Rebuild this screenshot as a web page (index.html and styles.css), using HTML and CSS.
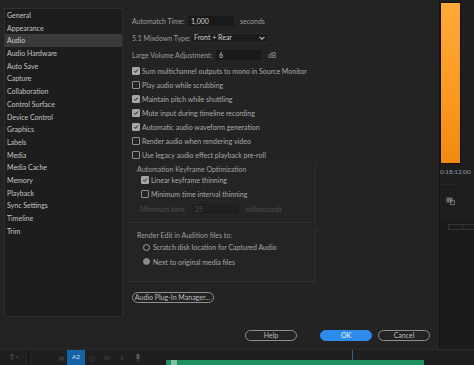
FILE: index.html
```html
<!DOCTYPE html>
<html>
<head>
<meta charset="utf-8">
<link rel="stylesheet" href="styles.css">
</head>
<body>
<div class="screen">
  <div class="top">
    <div class="dialog">
      <div class="main">
        <ul class="cats">
          <li>General</li>
          <li>Appearance</li>
          <li class="sel">Audio</li>
          <li>Audio Hardware</li>
          <li>Auto Save</li>
          <li>Capture</li>
          <li>Collaboration</li>
          <li>Control Surface</li>
          <li>Device Control</li>
          <li>Graphics</li>
          <li>Labels</li>
          <li>Media</li>
          <li>Media Cache</li>
          <li>Memory</li>
          <li>Playback</li>
          <li>Sync Settings</li>
          <li>Timeline</li>
          <li>Trim</li>
        </ul>
        <div class="pane">
          <div class="frow r1">
            <span class="lbl l1">Automatch Time:</span>
            <span class="field f1">1,000</span>
            <span class="unit">seconds</span>
          </div>
          <div class="frow r2">
            <span class="lbl l2">5.1 Mixdown Type:</span>
            <span class="select">Front + Rear
              <svg class="chev" width="6" height="4" viewBox="0 0 6 4"><path d="M0.6 0.8 L3 3.2 L5.4 0.8" fill="none" stroke="#b5b5b5" stroke-width="1.1"/></svg>
            </span>
          </div>
          <div class="frow r3">
            <span class="lbl l3">Large Volume Adjustment:</span>
            <span class="field f3">6</span>
            <span class="unit u3">dB</span>
          </div>
          <div class="checks">
            <div class="ck"><span class="cb on"><svg width="8" height="8" viewBox="0 0 8 8"><path d="M1.6 4.1 L3.3 5.8 L6.5 2" fill="none" stroke="#1c1c1c" stroke-width="1.3"/></svg></span><span>Sum multichannel outputs to mono in Source Monitor</span></div>
            <div class="ck"><span class="cb"></span><span>Play audio while scrubbing</span></div>
            <div class="ck"><span class="cb on"><svg width="8" height="8" viewBox="0 0 8 8"><path d="M1.6 4.1 L3.3 5.8 L6.5 2" fill="none" stroke="#1c1c1c" stroke-width="1.3"/></svg></span><span>Maintain pitch while shuttling</span></div>
            <div class="ck"><span class="cb on"><svg width="8" height="8" viewBox="0 0 8 8"><path d="M1.6 4.1 L3.3 5.8 L6.5 2" fill="none" stroke="#1c1c1c" stroke-width="1.3"/></svg></span><span>Mute input during timeline recording</span></div>
            <div class="ck"><span class="cb on"><svg width="8" height="8" viewBox="0 0 8 8"><path d="M1.6 4.1 L3.3 5.8 L6.5 2" fill="none" stroke="#1c1c1c" stroke-width="1.3"/></svg></span><span>Automatic audio waveform generation</span></div>
            <div class="ck"><span class="cb"></span><span>Render audio when rendering video</span></div>
            <div class="ck"><span class="cb"></span><span>Use legacy audio effect playback pre-roll</span></div>
          </div>
          <div class="group g1">
            <div class="gtitle">Automation Keyframe Optimization</div>
            <div class="ck gck"><span class="cb on"><svg width="8" height="8" viewBox="0 0 8 8"><path d="M1.6 4.1 L3.3 5.8 L6.5 2" fill="none" stroke="#1c1c1c" stroke-width="1.3"/></svg></span><span>Linear keyframe thinning</span></div>
            <div class="ck gck"><span class="cb"></span><span>Minimum time interval thinning</span></div>
            <div class="frow dis">
              <span class="lbl l4">Minimum time</span>
              <span class="field f4">25</span>
              <span class="unit">milliseconds</span>
            </div>
          </div>
          <div class="group g2">
            <div class="gtitle">Render Edit in Audition files to:</div>
            <div class="rd"><span class="radio"></span><span>Scratch disk location for Captured Audio</span></div>
            <div class="rd"><span class="radio on"></span><span>Next to original media files</span></div>
          </div>
          <div class="btnrow">
            <span class="btn plug">Audio Plug-In Manager...</span>
          </div>
        </div>
      </div>
      <div class="footer">
        <span class="btn help">Help</span>
        <span class="btn ok">OK</span>
        <span class="btn cancel">Cancel</span>
      </div>
    </div>
    <div class="side">
      <div class="meter"></div>
      <div class="tc">0:18:12:00</div>
      <div class="ticks">' ' ' ' ' '</div>
      <div class="sicon">
        <svg width="10" height="9" viewBox="0 0 10 9"><rect x="0.5" y="0.5" width="6" height="5" fill="#6a6a6a"/><rect x="4.5" y="3.5" width="4" height="4" fill="none" stroke="#7a7a7a" stroke-width="0.8"/></svg>
      </div>
      <div class="spanel">
        <div class="shead"><span class="sc1"></span><span class="sc2"></span></div>
      </div>
    </div>
  </div>
  <div class="timeline">
    <div class="tl-left">
      <svg width="10" height="10" viewBox="0 0 10 10"><path d="M3 8 V2 M1.5 3.5 L3 2 L4.5 3.5" fill="none" stroke="#555" stroke-width="0.9"/><path d="M7 5 h2" stroke="#555" stroke-width="0.9"/></svg>
    </div>
    <div class="tl-head">
      <span class="tl-ic">&#9636;</span>
      <span class="a2">A2</span>
      <span class="tl-ic">&#9707;</span>
      <span class="tl-ic">M</span>
      <span class="tl-ic">S</span>
      <svg class="mic" width="6" height="9" viewBox="0 0 6 9"><rect x="1.5" y="0.5" width="3" height="5.5" rx="1.5" fill="#5a5a5a"/><path d="M0.6 4.5 Q3 8 5.4 4.5 M3 7 V9" fill="none" stroke="#5a5a5a" stroke-width="0.7"/></svg>
    </div>
    <div class="tl-track">
      <div class="playhead"></div>
      <div class="clip"><span class="clip-hi"></span></div>
    </div>
  </div>
</div>
</body>
</html>
```
FILE: styles.css
```css
* { box-sizing: border-box; margin: 0; padding: 0; }
html, body { width: 474px; height: 365px; overflow: hidden; background: #1d1d1d; }
body { font-family: Lato, "Liberation Sans", sans-serif; font-size: 7px; color: #b0b0b0; }

.screen { display: flex; flex-direction: column; width: 474px; height: 365px; }
.top { display: flex; height: 349px; }

.dialog {
  width: 440px; height: 349px; background: #232323;
  border-right: 1px solid #141414;
  padding: 8px 9px 8px 4px;
  display: flex; flex-direction: column;
}
.main { display: flex; height: 309px; }

.cats {
  list-style: none; width: 119px; height: 309px;
  background: #1d1d1d; border: 1px solid #2e2e2e;
  padding-top: 0;
}
.cats li {
  height: 12.7px; line-height: 12.7px; padding-left: 2px;
  color: #c4c4c4; white-space: nowrap;
}
.cats li.sel { background: #3a3a3a; color: #d0d0d0; }

.pane { margin-left: 9px; display: flex; flex-direction: column; flex: 1; }

.frow { display: flex; align-items: center; height: 10px; white-space: nowrap; }
.r1 { margin-top: 7.7px; }
.r2 { margin-top: 7px; }
.r3 { margin-top: 7px; }
.lbl { color: #9c9c9c; }
.l1 { width: 56px; }
.l2 { width: 58px; }
.l3 { width: 84px; }
.l4 { width: 52px; }
.field {
  height: 10px; line-height: 10px; background: #191919; color: #cfcfcf;
  padding-left: 3px; border-radius: 1px;
}
.f1 { width: 46px; }
.f3 { width: 45px; }
.f4 { width: 47px; }
.unit { margin-left: 6px; color: #9c9c9c; }
.u3 { margin-left: 7px; }

.select {
  width: 79px; height: 10px; line-height: 9px; background: #1c1c1c;
  border: 1px solid #2c2c2c; border-radius: 1px;
  padding-left: 3px; color: #cfcfcf;
  display: flex; align-items: center; justify-content: space-between; padding-right: 3px;
}

.checks { margin-top: 4px; display: flex; flex-direction: column; }
.ck { display: flex; align-items: center; height: 14px; gap: 2px; color: #aaaaaa; white-space: nowrap; }
.cb {
  width: 8px; height: 8px; border: 1px solid #8e8e8e; border-radius: 1px; flex: none;
  display: flex; align-items: center; justify-content: center;
}
.cb.on { background: #a6a6a6; border-color: #a6a6a6; }
.cb svg { display: block; }

.group {
  margin-left: -4px; width: 188px;
  border-right: 1px solid #2f2f2f; border-bottom: 1px solid #2f2f2f;
  background: #242424;
  padding-left: 9px;
}
.g1 { margin-top: 0.3px; height: 61px; }
.g2 { margin-top: 4px; height: 55px; }
.gtitle { height: 10px; line-height: 10px; margin-top: 2px; color: #a0a0a0; white-space: nowrap; }
.g1 .gtitle { margin-top: 1.7px; }
.gck { margin-left: 4px; height: 13.3px; }
.gck:first-of-type { margin-top: 1px; }
.dis { margin-top: 4px; margin-left: 3px; color: #4e4e4e; }
.dis .lbl, .dis .unit { color: #4e4e4e; }
.dis .field { background: #1f1f1f; color: #4a4a4a; }

.g2 .gtitle { margin-top: 3.3px; }
.rd { display: flex; align-items: center; gap: 3px; height: 14.3px; margin-left: 6px; color: #a6a6a6; white-space: nowrap; }
.rd:first-of-type { margin-top: 2px; }
.radio { width: 7px; height: 7px; border-radius: 50%; border: 1px solid #a0a0a0; flex: none; }
.radio.on { background: #8c8c8c; border-color: #8c8c8c; }

.btnrow { margin-top: 10px; display: flex; }
.btn {
  height: 11px; line-height: 9px; border: 1px solid #8e8e8e; border-radius: 6px;
  color: #bdbdbd; text-align: center; white-space: nowrap;
}
.plug { width: 82px; margin-left: -0.5px; }

.footer { margin-top: 12px; height: 12px; display: flex; justify-content: flex-end; align-items: center; }
.help { width: 52px; }
.ok { width: 52px; margin-left: 23px; background: #2d8ceb; border-color: #2d8ceb; color: #f4f8ff; }
.cancel { width: 52px; margin-left: 6px; }

.side { width: 34px; background: #1e1e1e; display: flex; flex-direction: column; }
.meter {
  margin-top: 2px; width: 21px; height: 162px;
  background: linear-gradient(180deg, #ffa93a 0%, #fb9a22 55%, #f28a10 100%);
  border: 1px solid #121212;
}
.tc { margin-top: 3px; height: 10px; line-height: 10px; color: #8e9aa6; white-space: nowrap; font-size: 6.4px; letter-spacing: 0; }
.ticks { margin-top: 6px; height: 6px; line-height: 6px; color: #4a4a4a; white-space: nowrap; padding-left: 1px; font-size: 6px; }
.sicon { margin-top: 8px; padding-left: 6px; height: 10px; }
.sicon svg { display: block; }
.spanel {
  margin-top: 12px; flex: 1; margin-left: 1px;
  border-left: 1px solid #141414; border-right: 1px solid #141414;
  background: #1b1b1b; margin-right: -2px;
}
.shead { margin-left: 6px; height: 6px; border-top: 1px solid #333; border-bottom: 1px solid #333; border-left: 1px solid #333; display: flex; margin-top: 5px; }
.sc1 { width: 14px; border-right: 1px solid #333; }

.timeline { height: 16px; display: flex; background: #1f1f1f; border-top: 1px solid #2b2b2b; }
.tl-left { width: 29px; border-right: 1px solid #111; padding: 2px 0 0 9px; }
.tl-left svg { display: block; }
.tl-head { width: 137px; display: flex; align-items: center; gap: 0; padding-left: 29px; height: 15px; }
.tl-ic { color: #4c4c4c; font-size: 6px; width: 8px; text-align: center; }
.tl-head .tl-ic:first-child { margin-right: 1px; }
.a2 { width: 18px; height: 15px; background: #1562a6; color: #cfe2f5; text-align: center; line-height: 13px; font-size: 6.5px; margin: 0 3px 0 0; }
.tl-head .tl-ic + .tl-ic { margin-left: 7px; }
.mic { margin-left: 9px; }
.tl-track { flex: 1; position: relative; display: flex; flex-direction: column; justify-content: flex-end; }
.playhead { position: absolute; left: 186px; top: 0; width: 1px; height: 11px; background: #3a5f8a; }
.clip { height: 5px; width: 258px; background: #1f8f62; }
.clip-hi { display: block; margin-left: 5px; width: 6px; height: 5px; background: #7fbf9f; }
```
